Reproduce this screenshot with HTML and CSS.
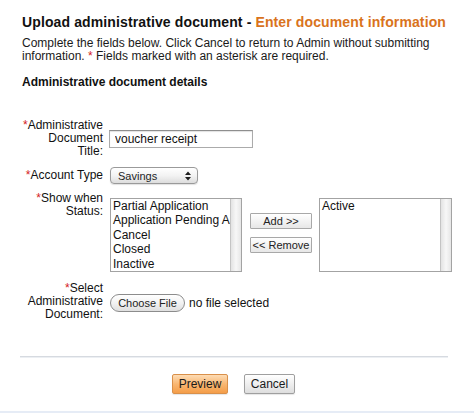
FILE: index.html
```html
<!DOCTYPE html>
<html lang="en">
<head>
<meta charset="utf-8">
<title>Upload administrative document</title>
<link rel="stylesheet" href="styles.css">
</head>
<body>
<div class="page">
  <h1 class="title">Upload administrative document - <span class="accent">Enter document information</span></h1>
  <p class="intro">Complete the fields below. Click Cancel to return to Admin without submitting information. <span class="req">*</span> Fields marked with an asterisk are required.</p>
  <h2 class="section">Administrative document details</h2>

  <form class="form">
    <div class="row row-title">
      <label class="lbl" for="docTitle"><span class="req">*</span>Administrative Document Title:</label>
      <div class="ctl"><input id="docTitle" class="text-input" type="text" value="voucher receipt"></div>
    </div>

    <div class="row row-account">
      <label class="lbl"><span class="req">*</span>Account Type</label>
      <div class="ctl">
        <div class="dropdown" role="combobox">
          <span class="dropdown-value">Savings</span>
          <svg class="dropdown-arrows" width="6" height="10" viewBox="0 0 6 10"><path d="M0 4 L3 0.5 L6 4 Z M0 6 L3 9.5 L6 6 Z" fill="#1e1e1e"/></svg>
        </div>
      </div>
    </div>

    <div class="row row-status">
      <label class="lbl"><span class="req">*</span>Show when Status:</label>
      <div class="ctl ctl-status">
        <div class="listbox" role="listbox">
          <div class="items">
            <div class="opt">Partial Application</div>
            <div class="opt">Application Pending Approval</div>
            <div class="opt">Cancel</div>
            <div class="opt">Closed</div>
            <div class="opt">Inactive</div>
          </div>
          <div class="scroll"></div>
        </div>
        <div class="mover">
          <button type="button" class="small-btn">Add &gt;&gt;</button>
          <button type="button" class="small-btn">&lt;&lt; Remove</button>
        </div>
        <div class="listbox listbox-right" role="listbox">
          <div class="items">
            <div class="opt">Active</div>
          </div>
          <div class="scroll"></div>
        </div>
      </div>
    </div>

    <div class="row row-file">
      <label class="lbl"><span class="req">*</span>Select Administrative Document:</label>
      <div class="ctl ctl-file">
        <button type="button" class="file-btn">Choose File</button>
        <span class="file-name">no file selected</span>
      </div>
    </div>
  </form>

  <hr class="rule">

  <div class="actions">
    <button type="button" class="btn btn-primary">Preview</button>
    <button type="button" class="btn btn-cancel">Cancel</button>
  </div>
</div>
<div class="band"></div>
</body>
</html>
```

FILE: styles.css
```css
html, body {
  overflow: hidden;
}

body {
  margin: 0;
  background: #fff;
  color: #111;
  font-family: "Liberation Sans", Arial, Helvetica, sans-serif;
  font-size: 12px;
}

.page {
  padding: 14px 26px 0 22px;
}

.title {
  margin: 0;
  font-size: 14px;
  line-height: 17px;
  font-weight: bold;
  letter-spacing: 0.12px;
  color: #111;
  white-space: nowrap;
}

.accent {
  color: #d9731c;
}

.intro {
  margin: 6px 0 0;
  line-height: 13px;
  color: #1a1a1a;
}

.req {
  color: #d41c1c;
}

.section {
  margin: 12px 0 0;
  font-size: 12px;
  line-height: 14px;
  font-weight: bold;
  color: #111;
}

.form {
  margin: 30px 0 0;
}

.row {
  display: flex;
  align-items: center;
}

.row-account {
  margin-top: 9px;
}

.row-status {
  margin-top: 8px;
  align-items: flex-start;
}

.row-file {
  margin-top: 10px;
}

.lbl {
  flex: none;
  width: 81px;
  margin-right: 7px;
  text-align: right;
  line-height: 13px;
  color: #111;
}

.text-input {
  box-sizing: border-box;
  width: 144px;
  height: 18px;
  margin: 0 0 0 -1px;
  padding: 0 5px;
  border: 1px solid #ababab;
  border-top-color: #8e8e8e;
  border-radius: 0;
  box-shadow: inset 0 1px 1px rgba(0, 0, 0, 0.12);
  font-family: "Liberation Sans", Arial, sans-serif;
  font-size: 12px;
  color: #111;
  outline: none;
}

.dropdown {
  box-sizing: border-box;
  width: 88px;
  height: 17px;
  display: flex;
  align-items: center;
  justify-content: space-between;
  padding: 0 6px 0 7px;
  border: 1px solid #9a9a9a;
  border-radius: 4px;
  background: linear-gradient(#ffffff, #f3f3f3 50%, #dddddd);
  box-shadow: 0 1px 1px rgba(0, 0, 0, 0.12);
  font-size: 11px;
  color: #1e1e1e;
}

.dropdown-arrows {
  display: block;
}

.ctl-status {
  display: flex;
  padding-top: 6px;
}

.listbox {
  box-sizing: border-box;
  width: 132px;
  height: 74px;
  display: flex;
  border: 1px solid #a3a3a3;
  background: #fff;
}

.listbox-right {
  width: 133px;
}

.items {
  flex: 1;
  min-width: 0;
  overflow: hidden;
  padding-left: 2px;
}

.opt {
  white-space: nowrap;
  line-height: 14.4px;
  font-size: 12px;
  color: #111;
}

.scroll {
  flex: none;
  width: 11px;
  background: linear-gradient(to right, #c4c4c4 0, #c4c4c4 1px, #e3e3e3 1px, #f7f7f7 55%, #e6e6e6 100%);
}

.mover {
  display: flex;
  flex-direction: column;
  gap: 8px;
  margin: 15px 7px 0 8px;
}

.small-btn {
  box-sizing: border-box;
  width: 62px;
  height: 16px;
  padding: 0;
  border: 1px solid #a8a8a8;
  border-radius: 1px;
  background: linear-gradient(#ffffff, #e7e7e7);
  font-family: "Liberation Sans", Arial, sans-serif;
  font-size: 11px;
  color: #222;
}

.ctl-file {
  display: flex;
  align-items: center;
  padding-top: 2px;
}

.file-btn {
  box-sizing: border-box;
  width: 75px;
  height: 18px;
  padding: 0;
  border: 1px solid #8c8c8c;
  border-radius: 9px;
  background: linear-gradient(#ffffff, #f2f2f2 50%, #dfdfdf);
  font-family: "Liberation Sans", Arial, sans-serif;
  font-size: 11px;
  color: #222;
}

.file-name {
  margin-left: 4px;
  color: #111;
}

.rule {
  margin: 35px 0 0 -2px;
  height: 0;
  border: 0;
  border-top: 1px solid #d6dae0;
  border-bottom: 1px solid #eceff3;
}

.actions {
  display: flex;
  justify-content: center;
  gap: 16px;
  margin-top: 16px;
  padding-right: 3px;
}

.btn {
  box-sizing: border-box;
  height: 20px;
  padding: 0;
  border: 1px solid #9f9f9f;
  border-radius: 2px;
  background: linear-gradient(#ffffff, #dedede);
  box-shadow: 0 1px 1px rgba(0, 0, 0, 0.1);
  font-family: "Liberation Sans", Arial, sans-serif;
  font-size: 12px;
  color: #1a1a1a;
}

.btn-primary {
  width: 56px;
  border-color: #d9904a;
  background: linear-gradient(#fddcb5, #f9b772 50%, #f49d48);
}

.btn-cancel {
  width: 51px;
}

.band {
  height: 2px;
  margin-top: 17px;
  background: #e6ecf6;
}
```
